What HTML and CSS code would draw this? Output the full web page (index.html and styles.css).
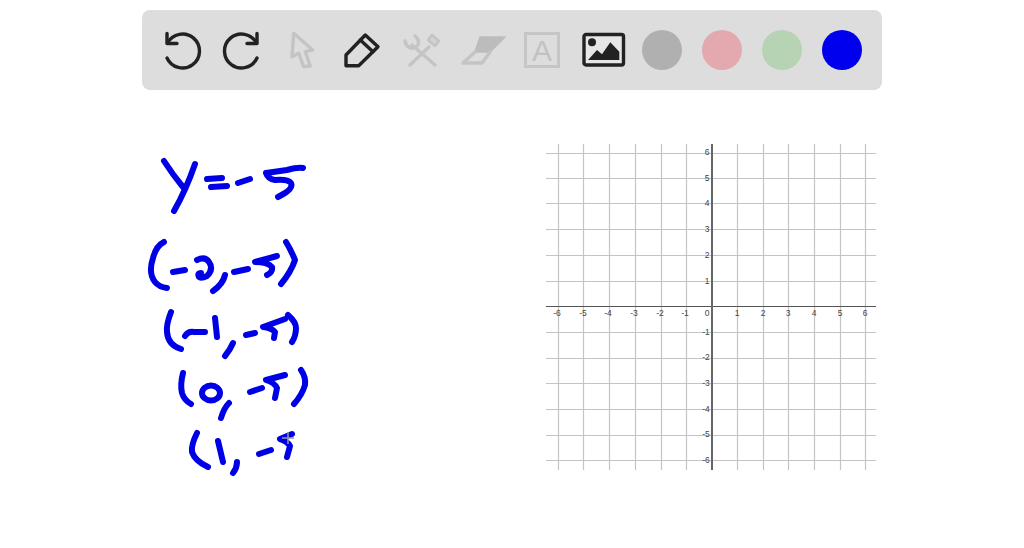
FILE: index.html
```html
<!DOCTYPE html>
<html>
<head>
    <title>Whiteboard</title>
    <link rel="stylesheet" href="styles.css">
</head>
<body>
    <div class="toolbar">
        <div class="tool">
            <svg class="icon dark" viewBox="0 0 40 40"><path d="M5 3.5V13.5H15"/><path d="M5.5 13A17 17 0 1 1 5 28"/></svg>
        </div>
        <div class="tool">
            <svg class="icon dark" viewBox="0 0 40 40"><path d="M35 3.5V13.5H25"/><path d="M34.5 13A17 17 0 1 0 35 28"/></svg>
        </div>
        <div class="tool">
            <svg class="icon faded" viewBox="0 0 40 40"><path d="M11.7 3.3L30.7 20L23.3 21.7L28.3 36L21.7 36.7L16.7 23.3L10 26.7Z"/></svg>
        </div>
        <div class="tool">
            <svg class="icon dark" viewBox="0 0 40 40"><path d="M4 25L23.3 5L36 16.7L16.7 35.7H4Z"/><path d="M18.3 10L31 21.7"/></svg>
        </div>
        <div class="tool">
            <svg class="icon faded" viewBox="0 0 40 40"><path d="M10 15L33 35"/><path d="M27 17L8 35"/><path d="M3 11C4 17 10 20 14 17C18 14 17 9 13 6"/><path class="head" d="M30 5L37 11L33 16L26 10Z"/></svg>
        </div>
        <div class="tool">
            <svg class="icon faded" viewBox="0 0 40 40"><path class="solid" d="M18 7H43L28 22H13Z"/><path d="M13 22L1 33H20L28 22"/></svg>
        </div>
        <div class="tool">
            <div class="text-tool">A</div>
        </div>
        <div class="tool">
            <svg class="icon dark" viewBox="0 0 40 40">
                <rect class="frame" x="2" y="4.5" width="39.5" height="30.5" rx="2"/>
                <circle class="fill-dark" cx="10" cy="12.3" r="4"/>
                <path class="fill-dark" d="M6 30L15 20L20 24.3L28.3 12.3L37.3 21.7V30Z"/>
            </svg>
        </div>
        <div class="tool"><div class="swatch swatch-gray"></div></div>
        <div class="tool"><div class="swatch swatch-pink"></div></div>
        <div class="tool"><div class="swatch swatch-green"></div></div>
        <div class="tool"><div class="swatch swatch-blue"></div></div>
    </div>

    <div class="board">
        <svg class="writing" viewBox="140 140 180 340">
            <!-- y = -5 -->
            <path d="M164 161Q173 175 183 187"/>
            <path d="M195 164Q186 190 174 211"/>
            <path d="M207 179L222 178"/>
            <path d="M211 187L227 186"/>
            <path d="M238 183L250 179"/>
            <path d="M303 168Q298 167 287 170L266 173Q268 179 275 180Q288 179 291 183Q294 189 278 197"/>
            <!-- (-2,-5) -->
            <path d="M164 242Q156 246 153 258Q148 273 155 282Q159 287 167 288"/>
            <path d="M173 272L185 270"/>
            <path d="M197 260Q205 256 209 262Q214 269 207 276Q201 279 199 277Q197 273 201 273"/>
            <path d="M225 275Q223 284 213 291"/>
            <path d="M234 272L248 269"/>
            <path d="M277 256L255 262Q268 262 272 267Q273 272 267 275"/>
            <path d="M286 242Q291 250 295 260Q291 272 281 284"/>
            <!-- (-1,-5) -->
            <path d="M171 312Q166 325 167 332Q168 345 181 349"/>
            <path d="M185 336Q188 331 194 332L205 332"/>
            <path d="M215 318L217 337"/>
            <path d="M233 343Q230 350 225 356"/>
            <path d="M246 335L255 333"/>
            <path d="M285 319L263 327Q272 328 275 332L274 338"/>
            <path d="M288 315Q296 322 296 328Q296 336 292 342"/>
            <!-- (0,-5) -->
            <path d="M183 373Q180 385 182 393Q184 400 191 404"/>
            <ellipse cx="211" cy="393" rx="9" ry="7.5"/>
            <path d="M229 403Q224 408 221 418"/>
            <path d="M250 392L262 388"/>
            <path d="M285 375L266 380Q275 383 277 388L275 398"/>
            <path d="M301 370Q306 377 305 385Q302 395 294 404"/>
            <!-- (1,-5 -->
            <path d="M197 433Q191 445 192 452Q195 461 208 467"/>
            <path d="M218 441L223 462"/>
            <path d="M237 462Q237 468 233 473"/>
            <path d="M259 454L271 450"/>
            <path d="M292 434L280 439Q287 441 290 446L287 457"/>
            <path class="pointer" d="M282 438H294M288 432V444"/>
        </svg>

        <svg class="graph" viewBox="540 140 340 335">
            <g class="grid">
                <path d="M558.5 144V470M583.5 144V470M609.5 144V470M635.5 144V470M661.5 144V470M686.5 144V470"/>
                <path d="M737.5 144V470M763.5 144V470M788.5 144V470M814.5 144V470M840.5 144V470M865.5 144V470"/>
                <path d="M546 153.5H876M546 178.5H876M546 203.5H876M546 229.5H876M546 255.5H876M546 281.5H876"/>
                <path d="M546 332.5H876M546 358.5H876M546 383.5H876M546 409.5H876M546 435.5H876M546 460.5H876"/>
            </g>
            <path class="axis-x" d="M546 306.5H876"/>
            <path class="axis-y" d="M712 144V470"/>
            <g class="labels">
                <text x="557" y="316">-6</text>
                <text x="583" y="316">-5</text>
                <text x="608" y="316">-4</text>
                <text x="634" y="316">-3</text>
                <text x="660" y="316">-2</text>
                <text x="685" y="316">-1</text>
                <text x="707" y="316">0</text>
                <text x="737" y="316">1</text>
                <text x="763" y="316">2</text>
                <text x="788" y="316">3</text>
                <text x="814" y="316">4</text>
                <text x="840" y="316">5</text>
                <text x="865" y="316">6</text>
                <text x="707" y="155">6</text>
                <text x="707" y="181">5</text>
                <text x="707" y="206">4</text>
                <text x="707" y="232">3</text>
                <text x="707" y="258">2</text>
                <text x="707" y="284">1</text>
                <text x="706" y="335">-1</text>
                <text x="706" y="360">-2</text>
                <text x="706" y="386">-3</text>
                <text x="706" y="412">-4</text>
                <text x="706" y="437">-5</text>
                <text x="706" y="463">-6</text>
            </g>
        </svg>
    </div>
</body>
</html>
```
FILE: styles.css
```css
body {
    margin: 0;
    background: #fff;
    font-family: "Liberation Sans", Arial, sans-serif;
}
.toolbar {
    display: grid;
    grid-template-columns: repeat(12, 60px);
    width: 720px;
    margin: 10px 0 0 142px;
    padding: 20px 10px;
    background: #dddddd;
    border-radius: 8px;
}
.tool {
    display: flex;
    justify-content: center;
    align-items: center;
    height: 40px;
}
.icon {
    width: 40px;
    height: 40px;
    overflow: visible;
    fill: none;
    stroke-width: 3.4;
    stroke-linecap: round;
    stroke-linejoin: round;
}
.icon.dark {
    stroke: #222;
}
.icon.faded {
    stroke: #c4c4c4;
}
.icon .solid {
    fill: #bcbcbc;
    stroke: #bcbcbc;
    stroke-width: 1.5;
}
.icon .head {
    fill: #d2d2d2;
    stroke-width: 2.5;
}
.icon .frame {
    fill: #e6e6e6;
}
.icon .fill-dark {
    fill: #222;
    stroke: none;
}
.text-tool {
    width: 30px;
    height: 30px;
    border: 3px solid #c6c6c6;
    color: #c2c2c2;
    font-size: 30px;
    line-height: 31px;
    text-align: center;
}
.swatch {
    width: 40px;
    height: 40px;
    border-radius: 50%;
}
.swatch-gray {
    background: #b0b0b0;
}
.swatch-pink {
    background: #e3a9ae;
}
.swatch-green {
    background: #b6d3b4;
}
.swatch-blue {
    background: #0000ee;
}
.board {
    display: flex;
    gap: 220px;
    margin: 50px 0 0 140px;
}
.writing {
    width: 180px;
    height: 340px;
    fill: none;
    stroke: #0000e6;
    stroke-width: 6;
    stroke-linecap: round;
    stroke-linejoin: round;
}
.writing .pointer {
    stroke: #9a9a9a;
    stroke-width: 1.5;
    stroke-linecap: butt;
}
.graph {
    width: 340px;
    height: 335px;
    fill: none;
}
.grid {
    stroke: #c4c4c4;
    stroke-width: 1.2;
}
.axis-x {
    stroke: #555;
    stroke-width: 1.2;
}
.axis-y {
    stroke: #666;
    stroke-width: 2;
}
.labels {
    fill: #444;
    font-size: 8.5px;
    text-anchor: middle;
}
```
